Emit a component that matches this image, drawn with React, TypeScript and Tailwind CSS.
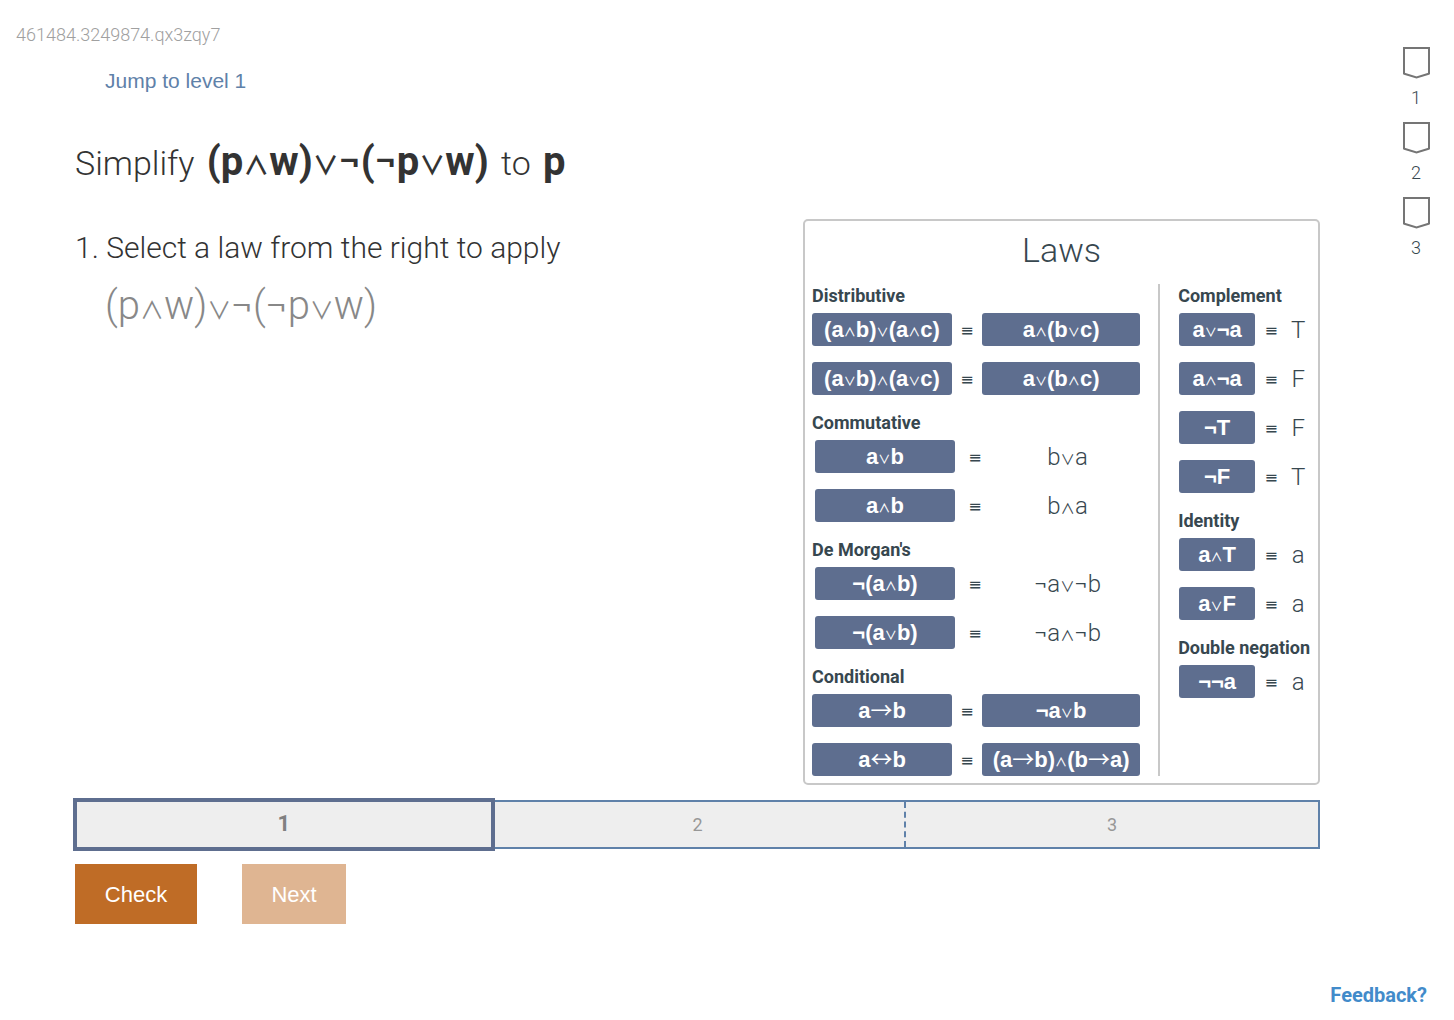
import { FormEventHandler, useState } from 'react';

interface Law {
    left: string;
    right: string;
    oneWay?: boolean;
}

interface LawGroup {
    name: string;
    laws: Law[];
}

const mainGroups: LawGroup[] = [
    {
        name: 'Distributive',
        laws: [
            { left: '(a∧b)∨(a∧c)', right: 'a∧(b∨c)' },
            { left: '(a∨b)∧(a∨c)', right: 'a∨(b∧c)' },
        ],
    },
    {
        name: 'Commutative',
        laws: [
            { left: 'a∨b', right: 'b∨a', oneWay: true },
            { left: 'a∧b', right: 'b∧a', oneWay: true },
        ],
    },
    {
        name: "De Morgan's",
        laws: [
            { left: '¬(a∧b)', right: '¬a∨¬b', oneWay: true },
            { left: '¬(a∨b)', right: '¬a∧¬b', oneWay: true },
        ],
    },
    {
        name: 'Conditional',
        laws: [
            { left: 'a→b', right: '¬a∨b' },
            { left: 'a↔b', right: '(a→b)∧(b→a)' },
        ],
    },
];

const sideGroups: LawGroup[] = [
    {
        name: 'Complement',
        laws: [
            { left: 'a∨¬a', right: 'T' },
            { left: 'a∧¬a', right: 'F' },
            { left: '¬T', right: 'F' },
            { left: '¬F', right: 'T' },
        ],
    },
    {
        name: 'Identity',
        laws: [
            { left: 'a∧T', right: 'a' },
            { left: 'a∨F', right: 'a' },
        ],
    },
    {
        name: 'Double negation',
        laws: [{ left: '¬¬a', right: 'a' }],
    },
];

// ∧ and ∨ are set smaller than the letters around them
function Expression({ text, opClass = 'text-[0.6em] font-normal' }: { text: string; opClass?: string }) {
    return (
        <>
            {text.split(/([∧∨→↔])/).map((part, i) => {
                if (part === '∧' || part === '∨') {
                    return (
                        <span key={i} className={"font-['Noto_Sans_CJK_SC',sans-serif] leading-none " + opClass}>
                            {part}
                        </span>
                    );
                }
                if (part === '→' || part === '↔') {
                    return (
                        <span key={i} className="font-['Noto_Sans_CJK_SC',sans-serif] leading-none font-normal">
                            {part}
                        </span>
                    );
                }
                return part;
            })}
        </>
    );
}

function LawButton({ text, className }: { text: string; className: string }) {
    return (
        <button
            type="button"
            className={
                "h-[33px] rounded-[3px] bg-[#5e6e8f] text-center font-['Liberation_Sans',sans-serif] text-[22px] leading-[33px] font-bold text-white " +
                className
            }
        >
            <Expression text={text} opClass="text-[0.55em] font-medium" />
        </button>
    );
}

function Equiv({ className }: { className: string }) {
    return (
        <span
            className={
                "shrink-0 pt-[3px] text-center font-['DejaVu_Sans',sans-serif] text-base " + className
            }
        >
            ≡
        </span>
    );
}

function Bookmark({ level }: { level: number }) {
    return (
        <li className="flex h-[75px] flex-col items-center">
            <svg width="28" height="33" viewBox="0 0 28 33" fill="none" stroke="#757575" strokeWidth="2">
                <path d="M2 28V2H27V28" />
                <path d="M1.5 27.5L14.5 31.5L27.5 27.5" />
            </svg>
            <span className="mt-[9px] text-lg leading-5 font-light">{level}</span>
        </li>
    );
}

export default function App() {
    const [step] = useState(1);

    const submitCheck: FormEventHandler = (e) => {
        e.preventDefault();
    };

    return (
        <div className="relative flex min-h-screen bg-white font-['Roboto',sans-serif] text-[#333333]">
            <main className="flex-1 pl-[75px]">
                <div className="-ml-[59px] pt-[23px] text-lg leading-6 font-light text-[#a0a0a0]">
                    461484.3249874.qx3zqy7
                </div>
                <a
                    href="#level-1"
                    className="mt-5 ml-[30px] inline-block font-['Liberation_Sans',sans-serif] text-[21px] leading-7 text-[#5f81a9]"
                >
                    Jump to level 1
                </a>

                <h1 className="mt-[43px] text-[34px] leading-[48px] font-light">
                    Simplify{' '}
                    <b className="mx-1 text-[40px] leading-[48px] font-bold">
                        <Expression text="(p∧w)∨¬(¬p∨w)" opClass="text-[0.65em] font-bold" />
                    </b>{' '}
                    to <b className="mx-1 text-[40px] leading-[48px] font-bold">p</b>
                </h1>

                <div className="mt-8 flex justify-between">
                    <section className="pt-[9px]">
                        <h2 className="text-3xl leading-10 font-light">
                            1. Select a law from the right to apply
                        </h2>
                        <p className="mt-[14px] ml-[30px] text-[40px] leading-[48px] font-light text-[#888888]">
                            <Expression text="(p∧w)∨¬(¬p∨w)" />
                        </p>
                    </section>

                    <section className="w-[517px] shrink-0 rounded-[5px] border-2 border-[#c8c8c8] pb-[7px] text-[#37474f]">
                        <h2 className="pt-[7px] pb-3 text-center text-[34px] leading-[44px] font-light">Laws</h2>
                        <div className="flex">
                            <div className="flex-1 space-y-4 pr-[18px] pl-[7px]">
                                {mainGroups.map((group) => (
                                    <div key={group.name}>
                                        <h3 className="mb-[5px] text-lg leading-6 font-bold">{group.name}</h3>
                                        <div className="space-y-4">
                                            {group.laws.map((law) =>
                                                law.oneWay ? (
                                                    <div key={law.left} className="flex h-[33px] items-center pl-[3px]">
                                                        <LawButton text={law.left} className="w-[140px]" />
                                                        <Equiv className="w-10" />
                                                        <span className="flex-1 text-center text-2xl font-light">
                                                            <Expression text={law.right} />
                                                        </span>
                                                    </div>
                                                ) : (
                                                    <div key={law.left} className="flex h-[33px] items-center">
                                                        <LawButton text={law.left} className="w-[140px]" />
                                                        <Equiv className="w-[30px]" />
                                                        <LawButton text={law.right} className="flex-1" />
                                                    </div>
                                                ),
                                            )}
                                        </div>
                                    </div>
                                ))}
                            </div>

                            <div className="space-y-4 border-l-2 border-[#c8c8c8] pr-2 pl-[18px]">
                                {sideGroups.map((group) => (
                                    <div key={group.name}>
                                        <h3 className="mb-[5px] text-lg leading-6 font-bold whitespace-nowrap">
                                            {group.name}
                                        </h3>
                                        <div className="space-y-4 pl-px">
                                            {group.laws.map((law) => (
                                                <div key={law.left} className="flex h-[33px] items-center">
                                                    <LawButton text={law.left} className="w-[76px]" />
                                                    <Equiv className="w-8" />
                                                    <span className="w-[22px] text-center text-2xl font-light">
                                                        {law.right}
                                                    </span>
                                                </div>
                                            ))}
                                        </div>
                                    </div>
                                ))}
                            </div>
                        </div>
                    </section>
                </div>

                {/* Progress */}
                <ol className="mt-[15px] grid h-[49px] grid-cols-3 border-2 border-[#5f81a9] bg-[#eeeeee] text-center text-lg text-[#979797]">
                    {[1, 2, 3].map((n) => (
                        <li
                            key={n}
                            className={
                                'flex items-center justify-center ' +
                                (n === step
                                    ? '-m-1 border-4 border-[#5e6e8f] text-[22px] font-bold text-[#808080]'
                                    : n === 3
                                      ? 'border-l-2 border-dashed border-[#5f81a9]'
                                      : '')
                            }
                        >
                            {n}
                        </li>
                    ))}
                </ol>

                <form
                    onSubmit={submitCheck}
                    className="mt-[15px] flex gap-[45px] font-['Liberation_Sans',sans-serif] text-[22px] text-white"
                >
                    <button type="submit" className="h-[60px] w-[122px] bg-[#bf6c26]">
                        Check
                    </button>
                    <button type="button" disabled className="h-[60px] w-[104px] bg-[#dfb592]">
                        Next
                    </button>
                </form>
            </main>

            <aside className="flex w-[134px] shrink-0 justify-end pt-[46px] pr-6 text-[#37474f]">
                <ul>
                    {[1, 2, 3].map((level) => (
                        <Bookmark key={level} level={level} />
                    ))}
                </ul>
            </aside>

            <a href="#feedback" className="absolute right-[27px] bottom-[13px] text-xl leading-6 font-bold text-[#428bca]">
                Feedback?
            </a>
        </div>
    );
}
